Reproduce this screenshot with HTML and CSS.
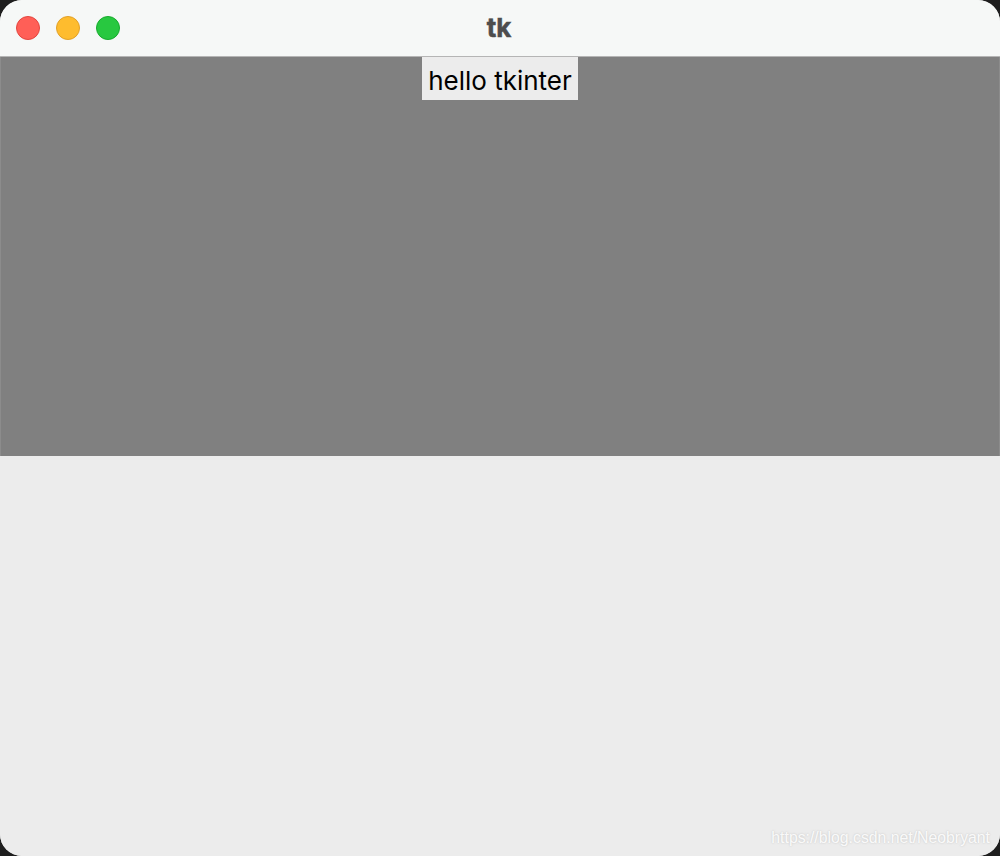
FILE: index.html
```html
<!DOCTYPE html>
<html lang="en">
<head>
<meta charset="utf-8">
<title>tk</title>
<link rel="stylesheet" href="styles.css">
</head>
<body>
<div class="window">
  <header class="titlebar">
    <div class="lights">
      <span class="light red"></span>
      <span class="light yellow"></span>
      <span class="light green"></span>
    </div>
    <div class="title">tk</div>
  </header>
  <main class="canvas">
    <div class="label">hello tkinter</div>
  </main>
  <div class="rest"></div>
  <div class="watermark">https://blog.csdn.net/Neobryant</div>
</div>
</body>
</html>
```
FILE: styles.css
```css
html, body {
  margin: 0;
  height: 100%;
  background: #1e1e1e;
  overflow: hidden;
}
.window {
  position: relative;
  width: 1000px;
  height: 856px;
  border-radius: 22px;
  overflow: hidden;
  background: #ececec;
  display: flex;
  flex-direction: column;
}
.titlebar {
  position: relative;
  height: 57px;
  flex: none;
  box-sizing: border-box;
  background: #f6f8f7;
  border-bottom: 1px solid #b5b5b5;
  display: flex;
  align-items: center;
  justify-content: center;
}
.lights {
  position: absolute;
  left: 16px;
  top: 16px;
  display: flex;
  gap: 16px;
}
.light {
  width: 24px;
  height: 24px;
  box-sizing: border-box;
  border-radius: 50%;
  border: 1px solid;
}
.red { background: #ff5f57; border-color: #e2463f; }
.yellow { background: #febc2e; border-color: #e1a028; }
.green { background: #28c840; border-color: #17ab2d; }
.title {
  font: 700 26px/1 Inter, "Liberation Sans", sans-serif;
  color: #4d4d4d;
  -webkit-text-stroke: 0.5px #4d4d4d;
  transform: translateX(-1px);
}
.canvas {
  height: 399px;
  flex: none;
  background: #808080;
  box-shadow: inset 1px 0 0 #8c8c8c, inset -1px 0 0 #8c8c8c;
  display: flex;
  justify-content: center;
  align-items: flex-start;
}
.label {
  width: 156px;
  height: 43px;
  background: #ececec;
  color: #000;
  font: 400 26px/48px Inter, "Liberation Sans", Arial, sans-serif;
  text-align: center;
  white-space: nowrap;
}
.rest {
  flex: 1;
  background: #ececec;
}
.watermark {
  position: absolute;
  right: 10px;
  bottom: 8px;
  font: 400 15.8px/20px "Liberation Sans", Arial, sans-serif;
  color: rgba(255, 255, 255, 0.9);
  text-shadow: 0 0 2px rgba(165, 165, 165, 0.6);
  white-space: nowrap;
}
```
